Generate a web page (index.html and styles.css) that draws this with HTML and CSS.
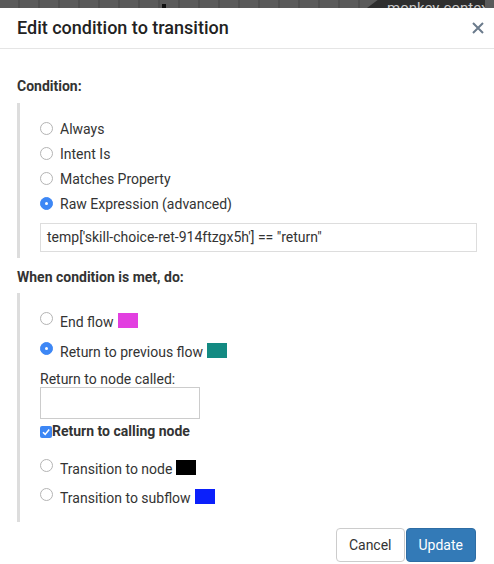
FILE: index.html
```html
<!DOCTYPE html>
<html>
<head>
<meta charset="utf-8">
<link rel="stylesheet" href="styles.css">
</head>
<body>
<div class="topbar">
  <div class="grid"><span class="marker"></span></div>
  <div class="ctx">monkey-context</div>
  <div class="tail"></div>
</div>
<div class="modal">
  <div class="modal-header">
    <h4 class="title">Edit condition to transition</h4>
    <svg class="close" width="12" height="12" viewBox="0 0 12 12"><path d="M1 1 L11 11 M11 1 L1 11" stroke="#6b7b8c" stroke-width="2" fill="none"/></svg>
  </div>
  <div class="modal-body">
    <div class="label label-first">Condition:</div>
    <div class="bar bar-cond">
      <label class="row"><span class="radio"></span>Always</label>
      <label class="row"><span class="radio"></span>Intent Is</label>
      <label class="row"><span class="radio"></span>Matches Property</label>
      <label class="row"><span class="radio checked"></span>Raw Expression (advanced)</label>
      <div class="expr">temp['skill-choice-ret-914ftzgx5h'] == "return"</div>
    </div>
    <div class="label label-second">When condition is met, do:</div>
    <div class="bar bar-do">
      <label class="opt"><span class="radio"></span>End flow <span class="swatch sw-end"></span></label>
      <label class="opt"><span class="radio checked"></span>Return to previous flow <span class="swatch sw-ret"></span></label>
      <div class="sub">
        <div class="sub-label">Return to node called:</div>
        <div class="node-input"></div>
        <label class="check-row"><span class="checkbox"><svg width="10" height="10" viewBox="0 0 10 10"><path d="M2 5.2 L4.2 7.4 L8.2 2.6" stroke="#fff" stroke-width="1.6" fill="none"/></svg></span>Return to calling node</label>
      </div>
      <label class="opt opt-node"><span class="radio"></span>Transition to node <span class="swatch sw-node"></span></label>
      <label class="opt"><span class="radio"></span>Transition to subflow <span class="swatch sw-sub"></span></label>
    </div>
    <div class="footer">
      <button class="btn btn-cancel">Cancel</button>
      <button class="btn btn-update">Update</button>
    </div>
  </div>
</div>
</body>
</html>
```
FILE: styles.css
```css
html, body {
  margin: 0;
  padding: 0;
}
body {
  width: 494px;
  height: 564px;
  overflow: hidden;
  background: #fff;
  font-family: Roboto, "Liberation Sans", Arial, sans-serif;
  color: #333;
}
.topbar {
  height: 8px;
  display: flex;
  overflow: hidden;
  background: #5a5a5a;
}
.grid {
  width: 367px;
  height: 8px;
  background: repeating-linear-gradient(90deg, #5a5a5a 0, #5a5a5a 18px, #4f4f4f 18px, #4f4f4f 20px);
  position: relative;
}
.marker {
  position: absolute;
  left: 162px;
  top: 4px;
  width: 4px;
  height: 4px;
  background: #111;
}
.ctx {
  width: 118px;
  height: 8px;
  background: #2e2e2e;
  clip-path: polygon(12px 0, 100% 0, 100% 100%, 0 100%);
  color: #c9c9c9;
  font-size: 15px;
  line-height: 18px;
  padding-left: 20px;
  box-sizing: border-box;
  white-space: nowrap;
  overflow: hidden;
  margin-top: -1px;
  height: 9px;
}
.tail {
  flex: 1;
  background: #5a5a5a;
}
.modal {
  background: #fff;
}
.modal-header {
  height: 40px;
  border-bottom: 1px solid #e5e5e5;
  display: flex;
  align-items: center;
  justify-content: space-between;
  padding: 0 10px 0 17px;
}
.title {
  margin: 0;
  font-size: 18px;
  font-weight: 500;
  color: #222;
  line-height: 24px;
}
.close {
  display: block;
}
.modal-body {
  padding: 0 17px;
}
.label {
  font-size: 14px;
  font-weight: 700;
  line-height: 16px;
  color: #333;
}
.label-first {
  padding-top: 29px;
}
.label-second {
  margin-top: 11px;
}
.bar {
  border-left: 3px solid #ddd;
  padding-left: 20px;
  margin-top: 9px;
}
.bar-cond {
  padding-top: 13px;
  padding-bottom: 6px;
}
.row {
  display: flex;
  align-items: center;
  height: 25px;
  font-size: 14px;
}
.radio {
  width: 13px;
  height: 13px;
  border-radius: 50%;
  border: 1px solid #b4b4b4;
  box-sizing: border-box;
  background: #fff;
  margin-right: 7px;
  flex: none;
  position: relative;
}
.radio.checked {
  background: #3d87f5;
  border-color: #3d87f5;
}
.radio.checked::after {
  content: "";
  position: absolute;
  left: 4px;
  top: 4px;
  width: 3px;
  height: 3px;
  border-radius: 50%;
  background: #fff;
}
.expr {
  margin-top: 7px;
  height: 29px;
  border: 1px solid #ddd;
  box-sizing: border-box;
  padding: 0 6px;
  font-size: 14px;
  line-height: 27px;
  color: #333;
}
.bar-do {
  margin-top: 8px;
  padding-top: 19px;
  padding-bottom: 14px;
}
.opt {
  display: flex;
  align-items: flex-start;
  font-size: 14px;
  line-height: 20px;
  height: 20px;
  margin-bottom: 10px;
}
.opt .radio {
  margin-top: 0;
}
.swatch {
  display: inline-block;
  width: 20px;
  height: 15px;
  margin-left: 4px;
  margin-top: 1px;
}
.sw-end { background: #e23fe0; }
.sw-ret { background: #138a82; }
.sw-node { background: #000; }
.sw-sub { background: #0b20fb; }
.sub {
  margin-top: -2px;
}
.sub-label {
  font-size: 14px;
  line-height: 18px;
}
.node-input {
  width: 160px;
  height: 32px;
  border: 1px solid #ccc;
  box-sizing: border-box;
  margin-top: -1px;
}
.check-row {
  display: flex;
  align-items: center;
  font-size: 14px;
  font-weight: 700;
  line-height: 17px;
  margin-top: 4px;
}
.checkbox {
  width: 12px;
  height: 12px;
  border-radius: 2px;
  background: #3d87f5;
  display: flex;
  align-items: center;
  justify-content: center;
  flex: none;
}
.checkbox svg {
  display: block;
}
.opt-node {
  margin-top: 19px;
  margin-bottom: 9px;
}
.opt:last-child {
  margin-bottom: 0;
}
.footer {
  display: flex;
  justify-content: flex-end;
  margin-top: 6px;
  padding-right: 1px;
}
.btn {
  height: 34px;
  font-family: Roboto, "Liberation Sans", Arial, sans-serif;
  font-size: 14px;
  padding: 0 12px;
  border-radius: 4px;
  border: 1px solid #ccc;
  background: #fff;
  color: #333;
  line-height: 32px;
}
.btn-cancel {
  border-top-right-radius: 4px;
}
.btn-update {
  background: #337ab7;
  border-color: #2e6da4;
  color: #fff;
  margin-left: 1px;
}
```
